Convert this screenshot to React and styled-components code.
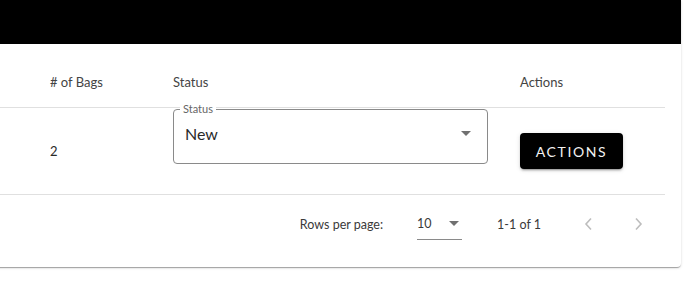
import React from 'react';
import styled, { createGlobalStyle } from 'styled-components';

const GlobalStyle = createGlobalStyle`
  html, body {
    margin: 0;
    padding: 0;
    background: #ffffff;
  }
  body {
    font-family: 'Lato', 'Open Sans', Arial, sans-serif;
    color: rgba(0, 0, 0, 0.87);
  }
`;

const Page = styled.div`
  width: 700px;
  height: 281px;
  overflow: hidden;
  display: flex;
  align-items: flex-start;
`;

const Card = styled.div`
  margin-left: -8px;
  width: 689px;
  padding: 0 16px 14px 0;
  box-sizing: border-box;
  background: #ffffff;
  border-radius: 0 0 4px 4px;
  box-shadow: 0 2px 1px -1px rgba(0, 0, 0, 0.2), 0 1px 1px 0 rgba(0, 0, 0, 0.14),
    0 1px 3px 0 rgba(0, 0, 0, 0.12);
`;

const CardHeader = styled.div`
  height: 44px;
  background: #000000;
  margin-right: -16px;
`;

const Row = styled.div`
  display: grid;
  grid-template-columns: 42px 123px 347px 1fr;
  border-bottom: 1px solid #e0e0e0;
  height: ${props => props.height}px;
  box-sizing: border-box;
`;

const HeadCell = styled.div`
  display: flex;
  align-items: center;
  padding: 12px 16px 0;
  font-size: 13px;
  color: #444;
`;

const BodyCell = styled.div`
  display: flex;
  align-items: ${props => (props.top ? 'flex-start' : 'center')};
  padding: ${props => (props.top ? '1px 16px 0' : '0 16px')};
  font-size: 13px;
  color: #2a2a2a;
`;

const Outlined = styled.div`
  position: relative;
  width: 315px;
  height: 55px;
  border: 1px solid #8a8a8a;
  border-radius: 4px;
  box-sizing: border-box;
  display: flex;
  align-items: center;
  justify-content: space-between;
  padding: 0 16px 6px 11px;
  font-size: 16px;
  color: #2a2a2a;
`;

const FloatLabel = styled.span`
  position: absolute;
  top: -8px;
  left: 6px;
  padding: 0 3px;
  background: #ffffff;
  font-size: 11px;
  line-height: 14px;
  color: #666;
`;

const ActionButton = styled.button`
  width: 103px;
  height: 36px;
  border: none;
  border-radius: 4px;
  background: #000000;
  color: #f2f2f2;
  font-family: inherit;
  font-size: 14px;
  letter-spacing: 1.6px;
  text-transform: uppercase;
  box-shadow: 0 3px 1px -2px rgba(0, 0, 0, 0.2), 0 2px 2px 0 rgba(0, 0, 0, 0.14),
    0 1px 5px 0 rgba(0, 0, 0, 0.12);
  padding: 0;
`;

const Pagination = styled.div`
  height: 58px;
  display: flex;
  align-items: center;
  justify-content: flex-end;
  padding-right: 7px;
  font-size: 12.5px;
  color: #3a3a3a;
`;

const RowsLabel = styled.span`
  margin-right: 34px;
`;

const PageSelect = styled.div`
  width: 45px;
  height: 30px;
  margin-top: 2px;
  box-sizing: border-box;
  border-bottom: 1px solid #8a8a8a;
  display: flex;
  align-items: center;
  justify-content: space-between;
  padding: 0 3px 2px 0;
  margin-right: 35px;
`;

const Range = styled.span`
  margin-right: 28px;
`;

const NavButton = styled.button`
  width: 40px;
  height: 40px;
  border: none;
  background: transparent;
  display: flex;
  align-items: center;
  justify-content: center;
  padding: 0;
  margin-left: ${props => props.gap || 0}px;
`;

const DropArrow = ({ size = 10 }) => (
  <svg width={size} height={size / 2} viewBox="0 0 10 5">
    <path d="M0 0 L5 5 L10 0 Z" fill="#707070" />
  </svg>
);

const Chevron = ({ dir }) => (
  <svg width="10" height="14" viewBox="0 0 10 14">
    <polyline
      points={dir === 'left' ? '7,1.5 2,7 7,12.5' : '3,1.5 8,7 3,12.5'}
      fill="none"
      stroke="#bdbdbd"
      strokeWidth="1.6"
    />
  </svg>
);

export default function App() {
  return (
    <Page>
      <GlobalStyle />
      <Card>
        <CardHeader />
        <Row height={64}>
          <HeadCell />
          <HeadCell># of Bags</HeadCell>
          <HeadCell>Status</HeadCell>
          <HeadCell>Actions</HeadCell>
        </Row>
        <Row height={87}>
          <BodyCell />
          <BodyCell>2</BodyCell>
          <BodyCell top>
            <Outlined>
              <FloatLabel>Status</FloatLabel>
              <span>New</span>
              <DropArrow />
            </Outlined>
          </BodyCell>
          <BodyCell>
            <ActionButton>Actions</ActionButton>
          </BodyCell>
        </Row>
        <Pagination>
          <RowsLabel>Rows per page:</RowsLabel>
          <PageSelect>
            <span>10</span>
            <DropArrow />
          </PageSelect>
          <Range>1-1 of 1</Range>
          <NavButton>
            <Chevron dir="left" />
          </NavButton>
          <NavButton gap={9}>
            <Chevron dir="right" />
          </NavButton>
        </Pagination>
      </Card>
    </Page>
  );
}
